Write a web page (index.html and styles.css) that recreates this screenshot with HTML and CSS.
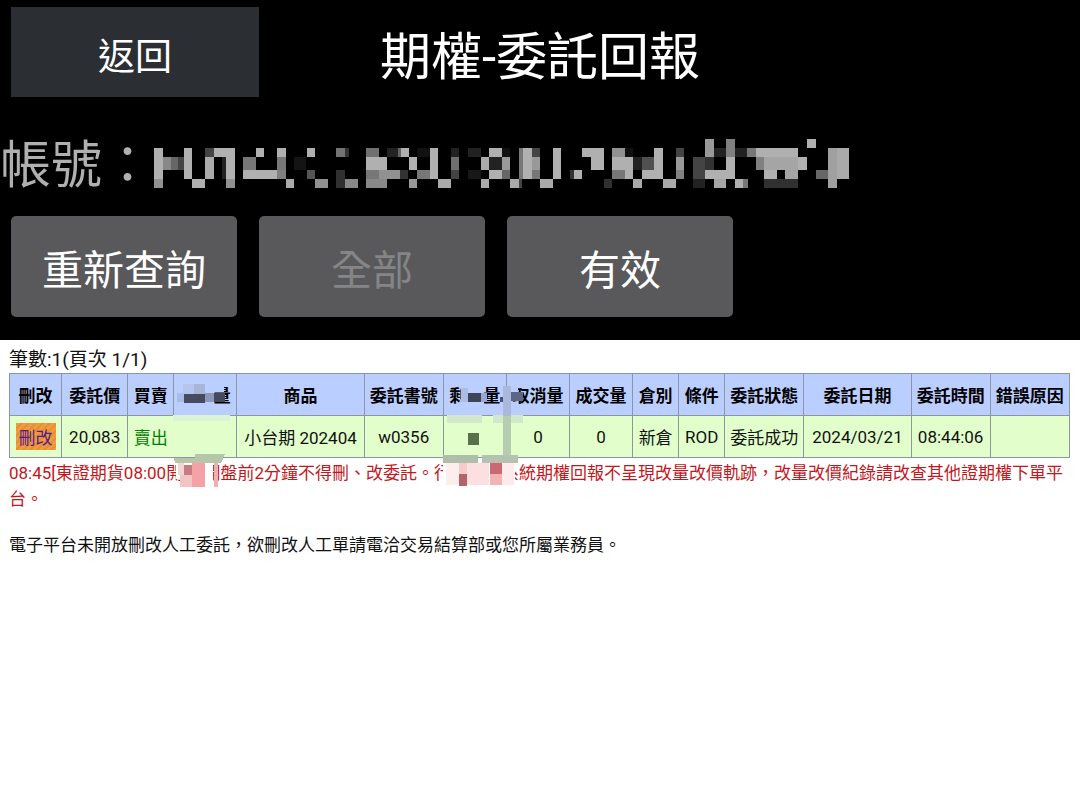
FILE: index.html
```html
<!DOCTYPE html>
<html lang="zh-Hant">
<head>
  <meta charset="UTF-8">
  <meta name="viewport" content="width=device-width, initial-scale=1.0">
  <title>期權-委託回報</title>
  <link rel="stylesheet" href="styles.css">
</head>
<body>
  <header class="top">
    <div class="title-bar">
      <button type="button" class="back">返回</button>
      <h1>期權-委託回報</h1>
    </div>
    <div class="account">
      <span>帳號：</span>
      <svg id="accountMask" class="account-mask" viewBox="0 0 696 49" width="696" height="49" shape-rendering="crispEdges" aria-hidden="true"></svg>
    </div>
    <div class="actions">
      <button type="button">重新查詢</button>
      <button type="button" disabled>全部</button>
      <button type="button">有效</button>
    </div>
  </header>

  <main class="report">
    <p class="count">筆數:1(頁次 1/1)</p>
    <table>
      <colgroup>
        <col class="w-edit"><col class="w-price"><col class="w-short"><col class="w-qty"><col class="w-product">
        <col class="w-four"><col class="w-qty"><col class="w-qty"><col class="w-qty"><col class="w-short">
        <col class="w-short"><col class="w-four"><col class="w-date"><col class="w-four"><col class="w-four">
      </colgroup>
      <thead>
        <tr>
          <th>刪改</th>
          <th>委託價</th>
          <th>買賣</th>
          <th>委託量</th>
          <th>商品</th>
          <th>委託書號</th>
          <th>剩餘量</th>
          <th>取消量</th>
          <th>成交量</th>
          <th>倉別</th>
          <th>條件</th>
          <th>委託狀態</th>
          <th>委託日期</th>
          <th>委託時間</th>
          <th>錯誤原因</th>
        </tr>
      </thead>
      <tbody>
        <tr>
          <td><a class="edit" href="#">刪改</a></td>
          <td>20,083</td>
          <td class="sell">賣出</td>
          <td></td>
          <td>小台期 202404</td>
          <td>w0356</td>
          <td></td>
          <td>0</td>
          <td>0</td>
          <td>新倉</td>
          <td>ROD</td>
          <td>委託成功</td>
          <td>2024/03/21</td>
          <td>08:44:06</td>
          <td></td>
        </tr>
      </tbody>
    </table>
    <p class="notice">08:45[東證期貨08:00開盤,開盤前2分鐘不得刪、改委託。行動下單系統期權回報不呈現改量改價軌跡，改量改價紀錄請改查其他證期權下單平台。</p>
    <p class="note">電子平台未開放刪改人工委託，欲刪改人工單請電洽交易結算部或您所屬業務員。</p>

    <svg class="mask mask-order" viewBox="173 384 58 106" width="58" height="106" shape-rendering="crispEdges" aria-hidden="true">
      <rect x="176" y="384" width="38" height="20" fill="#bacfff"/>
      <rect x="214" y="384" width="10" height="8" fill="#bacfff"/>
      <rect x="177" y="393" width="7" height="9" fill="#a9bce8"/>
      <rect x="183" y="384" width="11" height="10" fill="#b4c5ef"/>
      <rect x="194" y="384" width="11" height="10" fill="#a8b5d8"/>
      <rect x="184" y="394" width="21" height="9" fill="#474b5f"/>
      <rect x="205" y="393" width="9" height="9" fill="#8d98b8"/>
      <rect x="214" y="393" width="11" height="9" fill="#434a60"/>
      <rect x="173" y="415" width="57" height="42" fill="#e2ffcb"/>
      <rect x="173" y="415" width="57" height="6" fill="#dcf4d6"/>
      <path d="M174 458h21v-4h30l-4 9h-46z" fill="#b6c6a9"/>
      <path d="M176 463h37v26h-33v-10h-4z" fill="#fff"/>
      <rect x="178" y="463" width="6" height="12" fill="#f4d5d5"/>
      <rect x="184" y="465" width="8" height="10" fill="#c97b83"/>
      <rect x="180" y="475" width="12" height="12" fill="#f3c4c4"/>
      <rect x="192" y="463" width="13" height="24" fill="#f3a3a6"/>
      <rect x="214" y="463" width="4" height="24" fill="#eeb0b0"/>
    </svg>
    <svg class="mask mask-left" viewBox="442 384 82 106" width="82" height="106" shape-rendering="crispEdges" aria-hidden="true">
      <rect x="461" y="385" width="23" height="19" fill="#bacfff"/>
      <rect x="461" y="388" width="7" height="14" fill="#abbde7"/>
      <rect x="468" y="393" width="13" height="9" fill="#3e4457"/>
      <rect x="481" y="393" width="6" height="9" fill="#9aa8d0"/>
      <rect x="500" y="397" width="3" height="5" fill="#4b526c"/>
      <rect x="511" y="384" width="7" height="8" fill="#bacfff"/>
      <rect x="511" y="392" width="12" height="9" fill="#5d6684"/>
      <rect x="447" y="415" width="35" height="8" fill="#d1e9ca"/>
      <rect x="493" y="415" width="30" height="8" fill="#d1e9ca"/>
      <rect x="503" y="386" width="8" height="30" fill="#aab8da"/>
      <rect x="503" y="416" width="8" height="46" fill="#b7cdb1"/>
      <rect x="468" y="433" width="11" height="12" fill="#5a704b"/>
      <rect x="443" y="455" width="35" height="8" fill="#afbea8"/>
      <rect x="482" y="455" width="36" height="8" fill="#b5c2af"/>
      <path d="M443 463h72v22h-72z" fill="#fff"/>
      <rect x="446" y="463" width="13" height="22" fill="#fdeeee"/>
      <rect x="459" y="463" width="8" height="11" fill="#f4cccc"/>
      <rect x="467" y="463" width="22" height="22" fill="#fbe0df"/>
      <rect x="459" y="474" width="8" height="12" fill="#b2646b"/>
      <rect x="490" y="463" width="12" height="11" fill="#cb6972"/>
      <rect x="490" y="474" width="12" height="11" fill="#f2b3b5"/>
      <rect x="502" y="463" width="12" height="22" fill="#fdebeb"/>
    </svg>
  </main>

  <script src="mask.js"></script>
</body>
</html>
```
FILE: styles.css
```css
* {
  box-sizing: border-box;
}
body {
  margin: 0;
  background: #fff;
  color: #111;
  font-family: Roboto, "Noto Sans CJK TC", sans-serif;
  font-size: 17px;
}
button {
  border: 0;
  padding: 0;
  font-family: inherit;
  color: #fff;
}
h1, p {
  margin: 0;
}

/* top area */
.top {
  background: #000;
  padding-bottom: 23px;
}
.title-bar {
  display: grid;
  grid-template-columns: 248px 1fr 248px;
  align-items: center;
  padding: 7px 11px 0;
}
.back {
  height: 90px;
  padding-top: 3px;
  background: #2b2f33;
  font-size: 37px;
}
h1 {
  padding-top: 12px;
  text-align: center;
  font-size: 51px;
  font-weight: 400;
  line-height: 74px;
  color: #fff;
}
.account {
  display: flex;
  align-items: flex-start;
  height: 74px;
  margin-top: 30px;
  color: #b0b0b0;
  font-size: 51px;
  line-height: 78px;
  white-space: nowrap;
}
.account-mask {
  flex: none;
  margin-top: 12px;
}
.actions {
  display: flex;
  gap: 22px;
  padding: 15px 11px 0;
}
.actions button {
  width: 226px;
  height: 101px;
  border-radius: 5px;
  background: #59595b;
  font-size: 41px;
}
.actions button:disabled {
  color: #858587;
}

/* order list */
.report {
  position: relative;
  padding: 7px 10px 0 9px;
}
.count {
  font-size: 19px;
  line-height: 26px;
}
table {
  width: 100%;
  border-collapse: collapse;
  table-layout: fixed;
}
th, td {
  height: 42px;
  padding: 0;
  border: 1px solid #8b96a0;
  text-align: center;
  white-space: nowrap;
}
th {
  background: #bacfff;
  color: #000;
}
td {
  background: #e2ffcb;
}
.w-edit { width: 52px; }
.w-price { width: 66px; }
.w-short { width: 46px; }
.w-qty { width: 63px; }
.w-product { width: 127px; }
.w-four { width: 79px; }
.w-date { width: 107px; }
.edit {
  display: inline-block;
  padding: 1px 3px;
  background: repeating-linear-gradient(135deg, #f59a35 0 3px, #df913f 3px 5px);
  color: #551a8b;
  text-decoration: none;
}
.sell {
  color: #008000;
}
.notice {
  margin-top: 2px;
  color: #c4161c;
  line-height: 26px;
}
.note {
  margin-top: 20px;
  line-height: 26px;
}

/* blocks that hide private values */
.mask {
  position: absolute;
  top: 44px;
}
.mask-order {
  left: 173px;
}
.mask-left {
  left: 442px;
}
```
FILE: mask.js
```js
// top and bottom of each row of blocks
const rowY = [0, 9, 18, 31, 40, 49];

// [left, right, first row, last row, grey level]
const blocks = [
  [1, 10, 1, 3, 176], [1, 10, 4, 4, 145], [10, 18, 2, 2, 136], [18, 25, 2, 2, 102], [25, 31, 2, 2, 68],
  [31, 39, 1, 3, 176], [39, 52, 4, 4, 176], [52, 61, 1, 1, 68], [52, 61, 2, 3, 170], [61, 82, 1, 1, 176],
  [69, 73, 2, 3, 34], [73, 82, 2, 3, 176], [73, 82, 4, 4, 145], [90, 103, 2, 2, 119], [90, 133, 3, 3, 176],
  [103, 111, 1, 1, 176], [124, 133, 1, 1, 176], [124, 133, 2, 2, 119], [124, 133, 3, 3, 128], [133, 141, 4, 4, 170],
  [141, 153, 2, 2, 20], [154, 162, 1, 1, 176], [154, 162, 3, 3, 85], [162, 175, 4, 4, 145],
  [183, 192, 1, 1, 115], [192, 196, 1, 1, 51], [183, 192, 3, 4, 48], [192, 205, 4, 4, 136],
  [213, 226, 1, 1, 112], [213, 234, 2, 2, 176], [213, 226, 3, 3, 119], [213, 234, 4, 4, 136], [226, 247, 3, 3, 145],
  [247, 255, 3, 3, 51], [234, 245, 1, 1, 34], [245, 248, 1, 1, 100], [248, 256, 1, 1, 176],
  [256, 264, 2, 2, 176], [256, 264, 4, 4, 153], [264, 277, 1, 1, 17], [264, 277, 3, 3, 119],
  [277, 285, 1, 3, 176], [285, 298, 4, 4, 170], [298, 306, 1, 1, 34], [298, 306, 2, 2, 112], [298, 306, 3, 3, 68],
  [315, 328, 1, 1, 34], [315, 328, 3, 3, 24], [328, 336, 2, 2, 170], [328, 336, 4, 4, 170],
  [336, 349, 1, 1, 176], [336, 349, 2, 2, 34], [336, 349, 3, 3, 176], [349, 357, 1, 1, 17], [349, 357, 2, 2, 153],
  [349, 357, 3, 3, 102], [366, 370, 1, 3, 119], [370, 379, 1, 3, 176], [379, 387, 1, 1, 68], [379, 387, 2, 2, 153],
  [379, 387, 3, 3, 119], [357, 366, 4, 4, 170], [366, 369, 4, 4, 68], [387, 400, 4, 4, 170], [400, 408, 1, 3, 176],
  [417, 421, 3, 3, 51], [421, 429, 3, 3, 176], [429, 451, 1, 1, 176], [438, 451, 2, 2, 176], [451, 459, 4, 4, 48],
  [459, 472, 1, 1, 145], [472, 480, 1, 1, 17], [459, 480, 2, 2, 176], [459, 472, 3, 3, 119], [472, 480, 3, 3, 176],
  [480, 489, 4, 4, 170], [480, 489, 2, 2, 34], [489, 501, 2, 2, 80], [489, 510, 3, 3, 176], [501, 510, 1, 2, 176],
  [510, 523, 4, 4, 170], [523, 531, 1, 1, 68], [523, 531, 2, 2, 153], [523, 531, 3, 3, 128],
  [540, 552, 2, 3, 68], [540, 552, 4, 4, 34], [552, 561, 0, 1, 153], [552, 561, 2, 2, 51], [552, 582, 3, 3, 176],
  [561, 573, 1, 1, 34], [573, 582, 0, 1, 128], [573, 582, 2, 2, 176], [561, 573, 4, 4, 165], [582, 590, 4, 4, 176],
  [590, 595, 4, 4, 119], [582, 594, 1, 1, 34], [594, 603, 1, 1, 119], [603, 645, 1, 1, 176], [603, 611, 2, 2, 128],
  [611, 645, 2, 2, 165], [645, 654, 2, 2, 176], [611, 624, 3, 3, 176], [632, 645, 3, 3, 165], [611, 645, 4, 4, 48],
  [654, 663, 0, 0, 176], [663, 675, 3, 3, 102], [675, 684, 1, 4, 160], [684, 696, 1, 3, 170]
];

const mask = document.getElementById("accountMask");
blocks.forEach(([left, right, first, last, grey]) => {
  const rect = document.createElementNS("http://www.w3.org/2000/svg", "rect");
  rect.setAttribute("x", left);
  rect.setAttribute("y", rowY[first]);
  rect.setAttribute("width", right - left);
  rect.setAttribute("height", rowY[last + 1] - rowY[first]);
  rect.setAttribute("fill", `rgb(${grey}, ${grey}, ${grey})`);
  mask.appendChild(rect);
});
```
